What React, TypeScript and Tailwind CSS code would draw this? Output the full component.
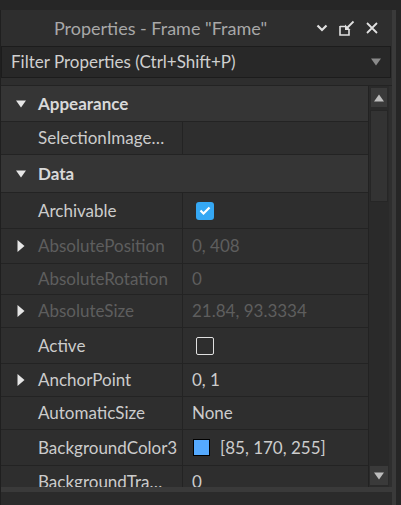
import React from "react";

const font = { fontFamily: "Lato, 'Noto Sans', sans-serif" };

function TriDown({ className = "" }: { className?: string }) {
  return (
    <svg width="10" height="8" viewBox="0 0 10 8" className={className}>
      <path d="M0 0.5 L10 0.5 L5 7.5 Z" fill="currentColor" />
    </svg>
  );
}
function TriRight() {
  return (
    <svg width="8" height="12" viewBox="0 0 8 12">
      <path d="M0.5 0 L7.5 6 L0.5 12 Z" fill="#e6e6e6" />
    </svg>
  );
}

type Row =
  | { kind: "header"; name: string; h: string }
  | {
      kind: "prop";
      name: string;
      h: string;
      value?: string;
      disabled?: boolean;
      expand?: boolean;
      check?: boolean;
      uncheck?: boolean;
      color?: string;
    };

const rows: Row[] = [
  { kind: "header", name: "Appearance", h: "h-[36px]" },
  { kind: "prop", name: "SelectionImage…", h: "h-[33px]" },
  { kind: "header", name: "Data", h: "h-[38px]" },
  { kind: "prop", name: "Archivable", check: true, h: "h-[36px]" },
  { kind: "prop", name: "AbsolutePosition", value: "0, 408", disabled: true, expand: true, h: "h-[35px]" },
  { kind: "prop", name: "AbsoluteRotation", value: "0", disabled: true, h: "h-[31px]" },
  { kind: "prop", name: "AbsoluteSize", value: "21.84, 93.3334", disabled: true, expand: true, h: "h-[33px]" },
  { kind: "prop", name: "Active", uncheck: true, h: "h-[36px]" },
  { kind: "prop", name: "AnchorPoint", value: "0, 1", expand: true, h: "h-[33px]" },
  { kind: "prop", name: "AutomaticSize", value: "None", h: "h-[33px]" },
  { kind: "prop", name: "BackgroundColor3", value: "[85, 170, 255]", color: "#55aaff", h: "h-[36px]" },
  { kind: "prop", name: "BackgroundTra…", value: "0", h: "h-[33px]" },
];

export default function App() {
  return (
    <div className="w-[401px] h-[505px] bg-[#262626] overflow-hidden flex flex-col" style={font}>
      <div className="h-[10px] shrink-0" />
      <div className="flex flex-row flex-1 min-h-0">
        <div className="w-[392px] flex flex-col bg-[#2e2e2e] border-l border-[#1f1f1f] min-h-0">
          {/* title */}
          <div className="h-[36px] shrink-0 flex items-center">
            <div className="flex-1 text-center text-[18px] text-[#a8a8a8] pl-[4px]">
              Properties - Frame "Frame"
            </div>
            <div className="flex items-center gap-[11px] pr-[14px] text-[#e0e0e0]">
              <svg width="12" height="8" viewBox="0 0 12 8">
                <path d="M1.5 1.5 L6 6 L10.5 1.5" stroke="currentColor" strokeWidth="2.2" fill="none" />
              </svg>
              <svg width="16" height="16" viewBox="0 0 16 16">
                <path d="M1 6.5 H6.5 M1 6 V15 H10 V10" stroke="currentColor" strokeWidth="1.6" fill="none" />
                <path d="M14.5 1.5 L7.5 8.5" stroke="currentColor" strokeWidth="1.8" fill="none" />
                <path d="M6 4.5 V10 H11.5 Z" fill="currentColor" />
              </svg>
              <svg width="12" height="12" viewBox="0 0 12 12">
                <path d="M1 1 L11 11 M11 1 L1 11" stroke="currentColor" strokeWidth="1.8" fill="none" />
              </svg>
            </div>
          </div>
          {/* filter */}
          <div className="h-[32px] shrink-0 mr-[1px] border border-[#1c1c1c] bg-[#282828] flex items-center pl-[9px] pr-[9px]">
            <div className="flex-1 text-[17px] text-[#cfcfcf]">Filter Properties (Ctrl+Shift+P)</div>
            <TriDown className="text-[#8a8a8a]" />
          </div>
          <div className="h-[7px] shrink-0" />
          {/* grid */}
          <div className="flex flex-row flex-1 min-h-0 border-t border-[#232323]">
            <div className="w-[367px] flex flex-col overflow-hidden">
              {rows.map((r, i) =>
                r.kind === "header" ? (
                  <div
                    key={i}
                    className={`${r.h} shrink-0 flex items-center bg-[#353535] border-b border-[#232323]`}
                  >
                    <div className="w-[37px] flex justify-center pl-[2px] text-[#e6e6e6]">
                      <TriDown />
                    </div>
                    <div className="text-[17px] font-bold text-[#d9d9d9]">{r.name}</div>
                  </div>
                ) : (
                  <div key={i} className={`${r.h} shrink-0 flex items-center border-b border-[#232323]`}>
                    <div className="w-[182px] h-full flex items-center border-r border-[#232323]">
                      <div className="w-[37px] flex justify-center pl-[2px]">{r.expand ? <TriRight /> : null}</div>
                      <div className={`text-[17px] whitespace-nowrap ${r.disabled ? "text-[#5e5e5e]" : "text-[#cccccc]"}`}>{r.name}</div>
                    </div>
                    <div className="flex-1 flex items-center pl-[9px]">
                      {r.check && (
                        <div className="ml-[4px] w-[18px] h-[18px] rounded-[3px] bg-[#35a8f4] flex items-center justify-center">
                          <svg width="12" height="9" viewBox="0 0 12 9">
                            <path d="M1.5 4.5 L4.5 7.5 L10.5 1.5" stroke="white" strokeWidth="2.2" fill="none" />
                          </svg>
                        </div>
                      )}
                      {r.uncheck && (
                        <div className="ml-[4px] w-[18px] h-[18px] rounded-[2px] border-[1.5px] border-[#e0e0e0]" />
                      )}
                      {r.color && (
                        <div className="ml-[1px] mr-[10px] w-[17px] h-[17px] border border-black" style={{ backgroundColor: r.color }} />
                      )}
                      {r.value && (
                        <div className={`text-[17px] ${r.disabled ? "text-[#5e5e5e]" : "text-[#cccccc]"}`}>{r.value}</div>
                      )}
                    </div>
                  </div>
                )
              )}
            </div>
            {/* scrollbar */}
            <div className="w-[21px] flex flex-col bg-[#2a2a2a] border-l border-[#222] px-[1px] pt-[1px]">
              <div className="h-[21px] bg-[#3a3a3a] border border-[#2a2a2a] flex items-center justify-center text-[#bdbdbd]">
                <TriDown className="rotate-180" />
              </div>
              <div className="mt-[2px] h-[92px] bg-[#333333] border border-[#262626]" />
              <div className="flex-1" />
              <div className="h-[19px] bg-[#3a3a3a] flex items-center justify-center text-[#bdbdbd]">
                <TriDown />
              </div>
              <div className="h-[2px]" />
            </div>
          </div>
          <div className="h-[5px] shrink-0 bg-[#3a3a3a]" />
          <div className="h-[13px] shrink-0 bg-[#2b2b2b]" />
        </div>
        <div className="w-[4px] bg-[#3a3a3a]" />
        <div className="flex-1 bg-[#262626]" />
      </div>
    </div>
  );
}
